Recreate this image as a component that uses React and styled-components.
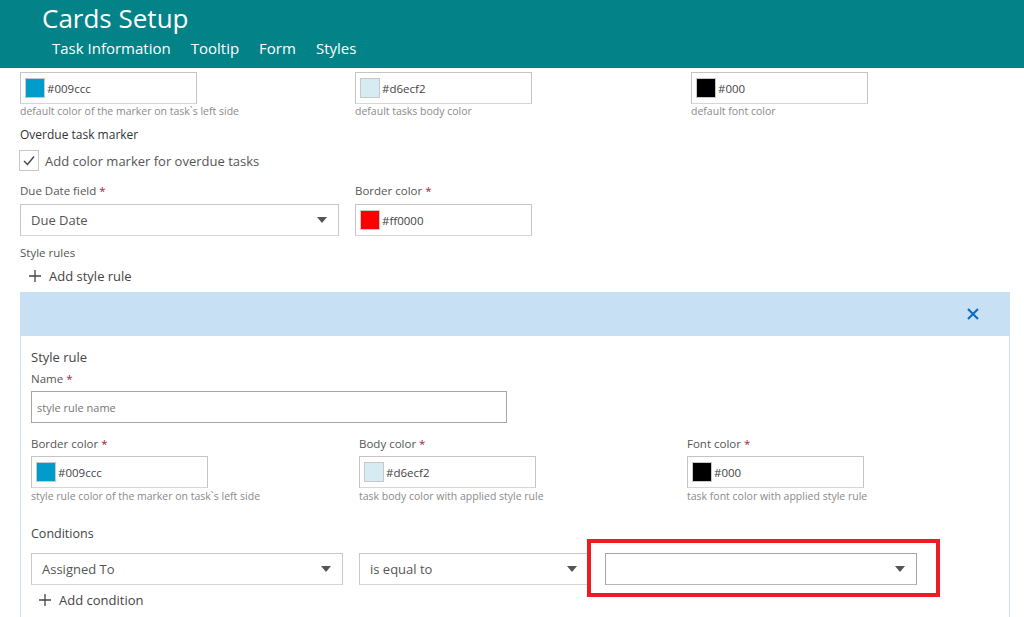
import React from "react";
import styled, { createGlobalStyle } from "styled-components";

const Global = createGlobalStyle`
  html, body { margin: 0; padding: 0; height: 617px; overflow: hidden; background: #fff; }
  body { font-family: "Open Sans", "Noto Sans", "Liberation Sans", sans-serif; color: #333; }
  * { box-sizing: border-box; }
`;

const Page = styled.div`
  width: 1024px;
  height: 617px;
  overflow: hidden;
`;
const Header = styled.header`
  height: 68px;
  background: #038387;
  color: #fff;
  padding-left: 42px;
`;
const Title = styled.h1`
  margin: 0;
  font-size: 26px;
  font-weight: 400;
  line-height: 36px;
`;
const Tabs = styled.nav`
  display: flex;
  gap: 20px;
  padding-left: 10px;
`;
const Tab = styled.span`
  font-size: 15px;
  line-height: 24px;
`;
const Body = styled.main`
  padding: 4px 14px 0 20px;
`;
const FieldRow = styled.div`
  display: grid;
  grid-template-columns: ${(p) => p.$columns};
  margin-top: ${(p) => p.$top || 0}px;
`;
const ColorBox = styled.div`
  display: flex;
  align-items: center;
  width: 177px;
  height: 32px;
  border: 1px solid #c4c4c4;
  border-bottom-color: #d6d6d6;
  padding-left: 4px;
  margin-top: ${(p) => p.$top || 0}px;
`;
const Swatch = styled.span`
  width: 20px;
  height: 20px;
  background: ${(p) => p.$color};
  border: 1px solid #c8c8c8;
  flex: none;
`;
const ColorValue = styled.span`
  margin-left: 2px;
  font-size: 11.5px;
  color: #444;
`;
const Hint = styled.div`
  font-size: 10.5px;
  line-height: 14px;
  color: #8a8a8a;
  margin-top: ${(p) => p.$top || 0}px;
  white-space: nowrap;
`;
const Label = styled.div`
  font-size: 11.5px;
  line-height: 16px;
  color: #555;
  margin-top: ${(p) => p.$top || 0}px;
`;
const Required = styled.span`
  color: #a4262c;
  margin-left: 3px;
`;
const DarkLabel = styled.div`
  font-size: 12px;
  line-height: 18px;
  color: #333;
  margin-top: ${(p) => p.$top || 0}px;
`;
const CheckRow = styled.div`
  display: flex;
  align-items: center;
  height: 21px;
  margin-top: 6px;
  margin-left: -1px;
`;
const CheckBox = styled.span`
  display: flex;
  align-items: center;
  justify-content: center;
  width: 20px;
  height: 21px;
  border: 1px solid #c8c8c8;
`;
const CheckText = styled.span`
  margin-left: 6px;
  font-size: 13px;
  color: #555;
`;
const SelectBox = styled.div`
  display: flex;
  align-items: center;
  justify-content: space-between;
  width: ${(p) => p.$width}px;
  height: 32px;
  padding: 0 11px 0 10px;
  border: 1px solid ${(p) => (p.$strong ? "#a6a6a6" : "#c8c8c8")};
  border-bottom-color: ${(p) => (p.$strong ? "#b4b4b4" : "#d6d6d6")};
  font-size: 13px;
  color: #555;
  margin-top: ${(p) => p.$top || 0}px;
`;
const Caret = styled.svg`
  width: 10px;
  height: 6px;
  flex: none;
`;
const AddRow = styled.div`
  display: flex;
  align-items: center;
  height: 20px;
  margin-top: 5px;
  padding-left: ${(p) => p.$indent}px;
  font-size: 13px;
  color: #444;
`;
const PlusIcon = styled.svg`
  width: 12px;
  height: 12px;
  margin-right: 8px;
  flex: none;
`;
const Panel = styled.section`
  margin-top: 6px;
  border: 1px solid #c7e0f4;
  border-width: 0 1px;
  height: 340px;
`;
const PanelHeader = styled.div`
  display: flex;
  align-items: center;
  justify-content: flex-end;
  height: 44px;
  margin: 0 -1px;
  padding-right: 31px;
  background: #c7e0f4;
`;
const CloseIcon = styled.svg`
  width: 12px;
  height: 12px;
`;
const PanelBody = styled.div`
  padding: 11px 10px 0;
`;
const PanelTitle = styled.div`
  font-size: 13px;
  line-height: 20px;
  color: #444;
`;
const TextInput = styled.div`
  display: flex;
  align-items: center;
  width: 476px;
  height: 32px;
  margin-top: 4px;
  padding-left: 5px;
  border: 1px solid #a6a6a6;
  font-size: 11px;
  color: #777;
`;
const SectionTitle = styled.div`
  font-size: 12.5px;
  line-height: 20px;
  color: #444;
  margin-top: 21px;
`;
const ConditionRow = styled.div`
  display: flex;
  gap: 16px;
  margin-top: 9px;
`;
const Highlighted = styled.div`
  position: relative;
`;
const Highlight = styled.span`
  position: absolute;
  left: -18px;
  top: -14px;
  width: 353px;
  height: 58px;
  border: 4px solid #ed1c24;
  pointer-events: none;
`;

const CaretDown = () => (
  <Caret viewBox="0 0 10 6"><path d="M0 0h10L5 6z" fill="#555" /></Caret>
);
const Plus = () => (
  <PlusIcon viewBox="0 0 12 12"><path d="M6 0v12M0 6h12" stroke="#444" strokeWidth="1.3" fill="none" /></PlusIcon>
);
const Color = ({ color, value, top }) => (
  <ColorBox $top={top}>
    <Swatch $color={color} />
    <ColorValue>{value}</ColorValue>
  </ColorBox>
);
const Req = () => <Required>*</Required>;

export default function App() {
  return (
    <Page>
      <Global />
      <Header>
        <Title>Cards Setup</Title>
        <Tabs>
          <Tab>Task Information</Tab>
          <Tab>Tooltip</Tab>
          <Tab>Form</Tab>
          <Tab>Styles</Tab>
        </Tabs>
      </Header>
      <Body>
        <FieldRow $columns="335px 336px 1fr">
          <div>
            <Color color="#009ccc" value="#009ccc" />
            <Hint>default color of the marker on task`s left side</Hint>
          </div>
          <div>
            <Color color="#d6ecf2" value="#d6ecf2" />
            <Hint>default tasks body color</Hint>
          </div>
          <div>
            <Color color="#000" value="#000" />
            <Hint>default font color</Hint>
          </div>
        </FieldRow>
        <DarkLabel $top={8}>Overdue task marker</DarkLabel>
        <CheckRow>
          <CheckBox>
            <svg width="12" height="11" viewBox="0 0 12 11"><path d="M1 6l3.5 3.5L11 1.5" stroke="#444" strokeWidth="1.4" fill="none" /></svg>
          </CheckBox>
          <CheckText>Add color marker for overdue tasks</CheckText>
        </CheckRow>
        <FieldRow $columns="335px 1fr" $top={12}>
          <div>
            <Label>Due Date field<Req /></Label>
            <SelectBox $width={319} $top={5}>Due Date<CaretDown /></SelectBox>
          </div>
          <div>
            <Label>Border color<Req /></Label>
            <Color color="#ff0000" value="#ff0000" top={5} />
          </div>
        </FieldRow>
        <Label $top={9}>Style rules</Label>
        <AddRow $indent={9}><Plus />Add style rule</AddRow>
        <Panel>
          <PanelHeader>
            <CloseIcon viewBox="0 0 12 12"><path d="M1 1l10 10M11 1L1 11" stroke="#106ebe" strokeWidth="2.2" fill="none" /></CloseIcon>
          </PanelHeader>
          <PanelBody>
            <PanelTitle>Style rule</PanelTitle>
            <Label $top={4}>Name<Req /></Label>
            <TextInput>style rule name</TextInput>
            <FieldRow $columns="328px 328px 1fr" $top={13}>
              <div>
                <Label>Border color<Req /></Label>
                <Color color="#009ccc" value="#009ccc" top={4} />
                <Hint $top={1}>style rule color of the marker on task`s left side</Hint>
              </div>
              <div>
                <Label>Body color<Req /></Label>
                <Color color="#d6ecf2" value="#d6ecf2" top={4} />
                <Hint $top={1}>task body color with applied style rule</Hint>
              </div>
              <div>
                <Label>Font color<Req /></Label>
                <Color color="#000" value="#000" top={4} />
                <Hint $top={1}>task font color with applied style rule</Hint>
              </div>
            </FieldRow>
            <SectionTitle>Conditions</SectionTitle>
            <ConditionRow>
              <SelectBox $width={312}>Assigned To<CaretDown /></SelectBox>
              <SelectBox $width={230}>is equal to<CaretDown /></SelectBox>
              <Highlighted>
                <SelectBox $width={312} $strong><span /><CaretDown /></SelectBox>
                <Highlight />
              </Highlighted>
            </ConditionRow>
            <AddRow $indent={8}><Plus />Add condition</AddRow>
          </PanelBody>
        </Panel>
      </Body>
    </Page>
  );
}
